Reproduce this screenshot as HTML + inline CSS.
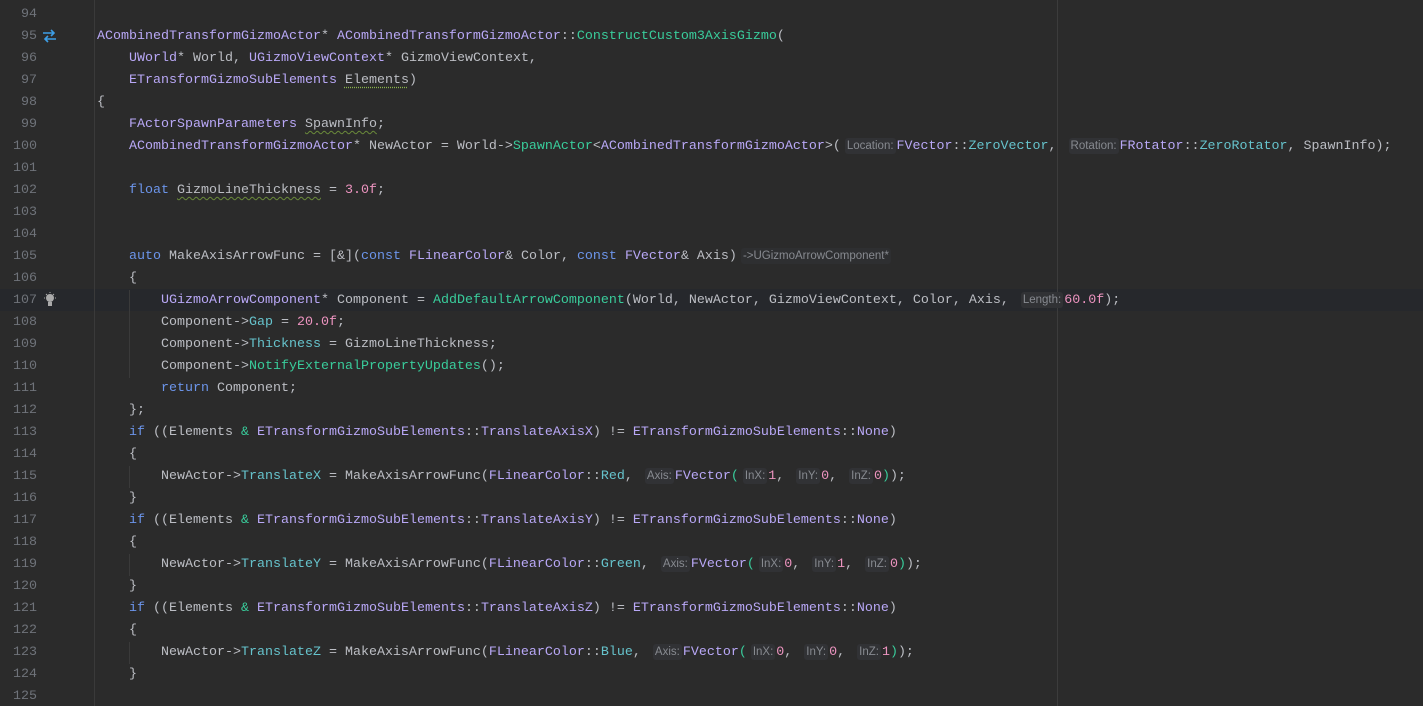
<!DOCTYPE html>
<html><head><meta charset="utf-8"><style>
html,body{margin:0;padding:0;background:#2b2b2b;width:1423px;height:706px;overflow:hidden}
body{position:relative;font-family:"Liberation Mono",monospace;font-size:13.33px;color:#bcbec4}
.ln{position:absolute;left:0;width:37px;text-align:right;color:#6f737a;height:22px;line-height:22px;margin-top:2px}
.c{position:absolute;left:97px;height:22px;line-height:22px;white-space:pre;margin-top:2px}
.cur{position:absolute;left:0;width:1423px;top:289px;height:22px;background:#26282c}
.sep{position:absolute;left:94px;top:0;width:1px;height:706px;background:#3a3a3a}
.rm{position:absolute;left:1057px;top:0;width:1px;height:706px;background:#3c3c3c}
.ig{position:absolute;width:1px;background:#3a3a3a;margin-top:2px}
.t{color:#b9a8f7}.k{color:#6c95eb}.m{color:#66c3cc}.f{color:#39cc9b}.n{color:#ed94c0}.g{color:#39cc9b}
.h{display:inline-block;font-family:"Liberation Sans",sans-serif;font-size:11.5px;color:#878a90;background:#313235;border-radius:3px;padding:0 2px;line-height:16px;margin:0 1px 0 4px}
.w{text-decoration:underline wavy #6a8a3a;text-decoration-thickness:1px;text-underline-offset:3px}
.d{text-decoration:underline dotted #8ab34a;text-underline-offset:4px}
</style></head><body>
<div class="cur"></div>
<div class="sep"></div>
<div class="rm"></div>
<div class="ig" style="left:129px;top:288px;height:88px"></div>
<div class="ig" style="left:129px;top:464px;height:22px"></div>
<div class="ig" style="left:129px;top:552px;height:22px"></div>
<div class="ig" style="left:129px;top:640px;height:22px"></div>
<svg style="position:absolute;left:42px;top:29px" width="15" height="14" viewBox="0 0 15 14"><path d="M1 4h11M9 1l3 3-3 3M14 10H3M6 7l-3 3 3 3" stroke="#3d9ee6" stroke-width="1.6" fill="none"/></svg>
<svg style="position:absolute;left:44px;top:292px" width="12" height="16" viewBox="0 0 12 16"><circle cx="6" cy="6" r="4" fill="#aaa"/><rect x="4" y="10" width="4" height="4" fill="#aaa"/><path d="M6 0v1M0 6h1M11 6h1M2 2l1 1M10 2l-1 1" stroke="#aaa"/></svg>
<div class="ln" style="top:2px">94</div>
<div class="ln" style="top:24px">95</div>
<div class="ln" style="top:46px">96</div>
<div class="ln" style="top:68px">97</div>
<div class="ln" style="top:90px">98</div>
<div class="ln" style="top:112px">99</div>
<div class="ln" style="top:134px">100</div>
<div class="ln" style="top:156px">101</div>
<div class="ln" style="top:178px">102</div>
<div class="ln" style="top:200px">103</div>
<div class="ln" style="top:222px">104</div>
<div class="ln" style="top:244px">105</div>
<div class="ln" style="top:266px">106</div>
<div class="ln" style="top:288px">107</div>
<div class="ln" style="top:310px">108</div>
<div class="ln" style="top:332px">109</div>
<div class="ln" style="top:354px">110</div>
<div class="ln" style="top:376px">111</div>
<div class="ln" style="top:398px">112</div>
<div class="ln" style="top:420px">113</div>
<div class="ln" style="top:442px">114</div>
<div class="ln" style="top:464px">115</div>
<div class="ln" style="top:486px">116</div>
<div class="ln" style="top:508px">117</div>
<div class="ln" style="top:530px">118</div>
<div class="ln" style="top:552px">119</div>
<div class="ln" style="top:574px">120</div>
<div class="ln" style="top:596px">121</div>
<div class="ln" style="top:618px">122</div>
<div class="ln" style="top:640px">123</div>
<div class="ln" style="top:662px">124</div>
<div class="ln" style="top:684px">125</div>

<div class="c" style="top:24px"><span class="t">ACombinedTransformGizmoActor</span>* <span class="t">ACombinedTransformGizmoActor</span>::<span class="f">ConstructCustom3AxisGizmo</span>(</div>
<div class="c" style="top:46px">    <span class="t">UWorld</span>* World, <span class="t">UGizmoViewContext</span>* GizmoViewContext,</div>
<div class="c" style="top:68px">    <span class="t">ETransformGizmoSubElements</span> <span class="d">Elements</span>)</div>
<div class="c" style="top:90px">{</div>
<div class="c" style="top:112px">    <span class="t">FActorSpawnParameters</span> <span class="w">SpawnInfo</span>;</div>
<div class="c" style="top:134px">    <span class="t">ACombinedTransformGizmoActor</span>* NewActor = World-&gt;<span class="f">SpawnActor</span>&lt;<span class="t">ACombinedTransformGizmoActor</span>&gt;(<span class="h">Location:</span><span class="t">FVector</span>::<span class="m">ZeroVector</span>, <span class="h">Rotation:</span><span class="t">FRotator</span>::<span class="m">ZeroRotator</span>, SpawnInfo);</div>
<div class="c" style="top:178px">    <span class="k">float</span> <span class="w">GizmoLineThickness</span> = <span class="n">3.0f</span>;</div>
<div class="c" style="top:244px">    <span class="k">auto</span> MakeAxisArrowFunc = [&amp;](<span class="k">const</span> <span class="t">FLinearColor</span>&amp; Color, <span class="k">const</span> <span class="t">FVector</span>&amp; Axis)<span class="h" style="background:#2e2f31">-&gt;UGizmoArrowComponent*</span></div>
<div class="c" style="top:266px">    {</div>
<div class="c" style="top:288px">        <span class="t">UGizmoArrowComponent</span>* Component = <span class="f">AddDefaultArrowComponent</span>(World, NewActor, GizmoViewContext, Color, Axis, <span class="h">Length:</span><span class="n">60.0f</span>);</div>
<div class="c" style="top:310px">        Component-&gt;<span class="m">Gap</span> = <span class="n">20.0f</span>;</div>
<div class="c" style="top:332px">        Component-&gt;<span class="m">Thickness</span> = GizmoLineThickness;</div>
<div class="c" style="top:354px">        Component-&gt;<span class="f">NotifyExternalPropertyUpdates</span>();</div>
<div class="c" style="top:376px">        <span class="k">return</span> Component;</div>
<div class="c" style="top:398px">    };</div>
<div class="c" style="top:420px">    <span class="k">if</span> ((Elements <span class="g">&amp;</span> <span class="t">ETransformGizmoSubElements</span>::<span class="t">TranslateAxisX</span>) != <span class="t">ETransformGizmoSubElements</span>::<span class="t">None</span>)</div>
<div class="c" style="top:442px">    {</div>
<div class="c" style="top:464px">        NewActor-&gt;<span class="m">TranslateX</span> = MakeAxisArrowFunc(<span class="t">FLinearColor</span>::<span class="m">Red</span>, <span class="h">Axis:</span><span class="t">FVector</span><span class="g">(</span><span class="h">InX:</span><span class="n">1</span>, <span class="h">InY:</span><span class="n">0</span>, <span class="h">InZ:</span><span class="n">0</span><span class="g">)</span>);</div>
<div class="c" style="top:486px">    }</div>
<div class="c" style="top:508px">    <span class="k">if</span> ((Elements <span class="g">&amp;</span> <span class="t">ETransformGizmoSubElements</span>::<span class="t">TranslateAxisY</span>) != <span class="t">ETransformGizmoSubElements</span>::<span class="t">None</span>)</div>
<div class="c" style="top:530px">    {</div>
<div class="c" style="top:552px">        NewActor-&gt;<span class="m">TranslateY</span> = MakeAxisArrowFunc(<span class="t">FLinearColor</span>::<span class="m">Green</span>, <span class="h">Axis:</span><span class="t">FVector</span><span class="g">(</span><span class="h">InX:</span><span class="n">0</span>, <span class="h">InY:</span><span class="n">1</span>, <span class="h">InZ:</span><span class="n">0</span><span class="g">)</span>);</div>
<div class="c" style="top:574px">    }</div>
<div class="c" style="top:596px">    <span class="k">if</span> ((Elements <span class="g">&amp;</span> <span class="t">ETransformGizmoSubElements</span>::<span class="t">TranslateAxisZ</span>) != <span class="t">ETransformGizmoSubElements</span>::<span class="t">None</span>)</div>
<div class="c" style="top:618px">    {</div>
<div class="c" style="top:640px">        NewActor-&gt;<span class="m">TranslateZ</span> = MakeAxisArrowFunc(<span class="t">FLinearColor</span>::<span class="m">Blue</span>, <span class="h">Axis:</span><span class="t">FVector</span><span class="g">(</span><span class="h">InX:</span><span class="n">0</span>, <span class="h">InY:</span><span class="n">0</span>, <span class="h">InZ:</span><span class="n">1</span><span class="g">)</span>);</div>
<div class="c" style="top:662px">    }</div>
</body></html>
